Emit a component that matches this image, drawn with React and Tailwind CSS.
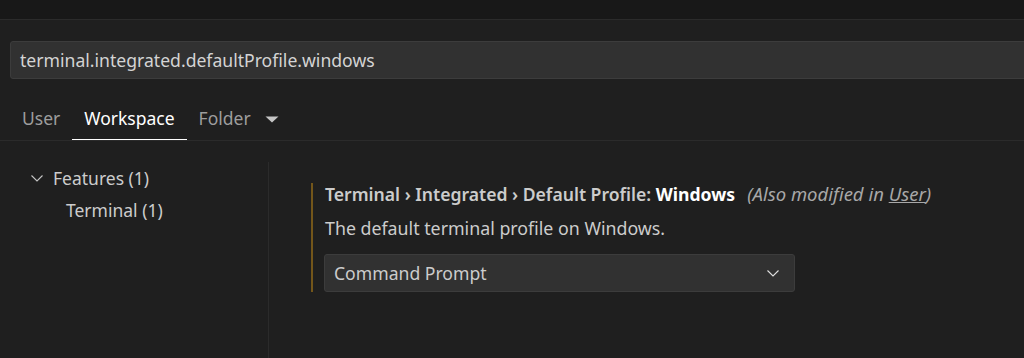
import React from "react";

const font = { fontFamily: '"Noto Sans", "Open Sans", sans-serif' };

function Chevron({ className }) {
  return (
    <svg viewBox="0 0 16 16" className={className} fill="none" stroke="currentColor" strokeWidth="1.1">
      <path d="M2.5 5.5 L8 11 L13.5 5.5" />
    </svg>
  );
}

export default function App() {
  return (
    <div className="w-[1024px] h-[358px] overflow-hidden bg-[#1f1f1f] text-[#cccccc] flex flex-col" style={font}>
      <div className="h-[20px] shrink-0 bg-[#181818] border-b border-[#2b2b2b]" />

      <div className="pt-[21px] pl-[10px] shrink-0">
        <div className="w-[1030px] h-[38px] bg-[#313131] border border-[#3c3c3c] rounded-[3px] flex items-center pl-[9px] text-[17.6px] text-[#d4d4d4]">
          terminal.integrated.defaultProfile.windows
        </div>
      </div>

      <div className="mt-[18px] h-[44px] shrink-0 border-b border-[#2b2b2b] flex items-stretch pl-[10px] text-[17.5px]">
        <div className="px-[12px] flex items-center text-[#9d9d9d]">User</div>
        <div className="px-[12px] flex items-center text-white border-b border-white">Workspace</div>
        <div className="px-[12px] flex items-center text-[#9d9d9d] gap-[13px]">
          Folder
          <svg viewBox="0 0 16 16" className="w-[16px] h-[16px]" fill="#c5c5c5">
            <path d="M1.5 5.5 L14.5 5.5 L8 11.5 Z" />
          </svg>
        </div>
      </div>

      <div className="flex-1 flex pt-[21px]">
        <div className="w-[268px] shrink-0 text-[17.5px] text-[#cccccc]">
          <div className="h-[32px] flex items-center pl-[29px] gap-[8px]">
            <Chevron className="w-[16px] h-[16px] text-[#c5c5c5]" />
            Features (1)
          </div>
          <div className="h-[32px] flex items-center pl-[66px]">Terminal (1)</div>
        </div>
        <div className="flex-1 border-l border-[#2b2b2b] pl-[42px] pt-[21px]">
          <div className="border-l-2 border-[#73561a] pl-[11px] w-[485px]">
            <div className="h-[22px] flex items-center text-[17.6px] whitespace-nowrap">
              <span className="font-semibold text-[#cccccc] pl-[1px]">
                Terminal › Integrated › Default Profile: <span className="font-bold text-white">Windows</span>
              </span>
              <span className="italic text-[#a8a8a8] ml-[12px] text-[18.5px]">
                (Also modified in <span className="underline">User</span>)
              </span>
            </div>
            <div className="mt-[12px] h-[22px] flex items-center text-[17.8px] text-[#cccccc] pl-[1px]">
              The default terminal profile on Windows.
            </div>
            <div className="mt-[15px] w-[471px] h-[38px] bg-[#313131] border border-[#3c3c3c] rounded-[3px] flex items-center justify-between pl-[9px] pr-[13px] text-[17.6px] text-[#cccccc]">
              Command Prompt
              <Chevron className="w-[16px] h-[16px] text-[#e0e0e0]" />
            </div>
          </div>
        </div>
      </div>
    </div>
  );
}
